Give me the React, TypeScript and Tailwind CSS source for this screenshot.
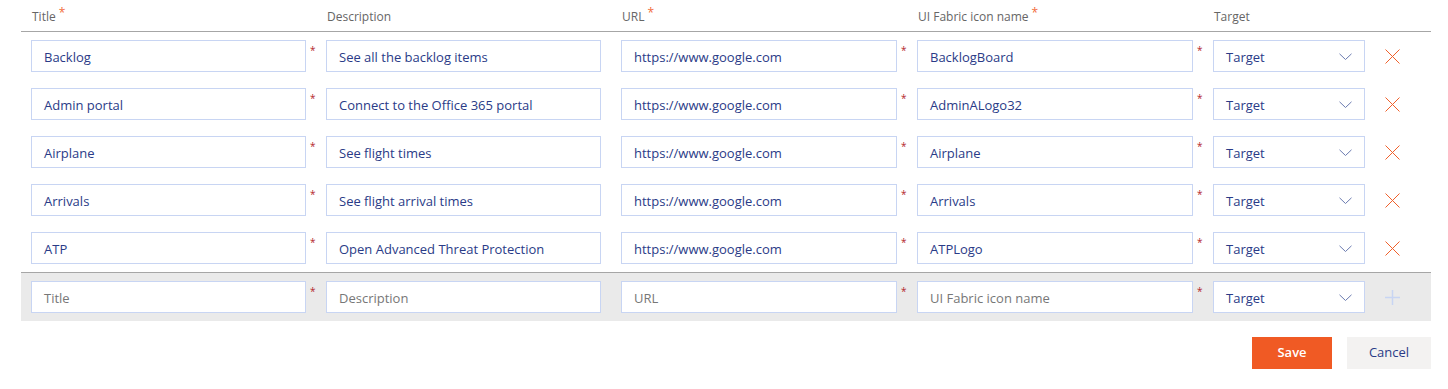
import React from 'react';

const rows = [
  { title: 'Backlog', description: 'See all the backlog items', url: 'https://www.google.com', icon: 'BacklogBoard' },
  { title: 'Admin portal', description: 'Connect to the Office 365 portal', url: 'https://www.google.com', icon: 'AdminALogo32' },
  { title: 'Airplane', description: 'See flight times', url: 'https://www.google.com', icon: 'Airplane' },
  { title: 'Arrivals', description: 'See flight arrival times', url: 'https://www.google.com', icon: 'Arrivals' },
  { title: 'ATP', description: 'Open Advanced Threat Protection', url: 'https://www.google.com', icon: 'ATPLogo' },
];

const grid = 'grid grid-cols-[275px_20px_275px_20px_276px_20px_276px_20px_152px_66px] items-start';

function Field({ value, placeholder }: { value?: string; placeholder?: string }) {
  return (
    <div className="h-8 border border-[#c8d5f3] bg-white pl-[12px] pt-[3px] flex items-center text-[13px] whitespace-nowrap overflow-hidden">
      {value ? <span className="text-[#2a3b87]">{value}</span> : <span className="text-[#777]">{placeholder}</span>}
    </div>
  );
}

function Req() {
  return <span className="block pl-[4px] pt-[5px] text-[10px] leading-none text-[#b3262c]">*</span>;
}

function TargetSelect() {
  return (
    <div className="h-8 border border-[#c8d5f3] bg-white pl-[12px] pr-[12px] flex items-center justify-between text-[13px]">
      <span className="text-[#2a3b87] pt-[3px]">Target</span>
      <svg width="13" height="8" viewBox="0 0 13 8" fill="none" className="mt-[2px]">
        <path d="M0.5 0.8 L6.5 6.5 L12.5 0.8" stroke="#6b7bb0" strokeWidth="1" />
      </svg>
    </div>
  );
}

function Row({ r, empty }: { r?: (typeof rows)[number]; empty?: boolean }) {
  return (
    <div className={`${grid} py-2 px-[10px]`}>
      <Field value={r?.title} placeholder="Title" />
      <Req />
      <Field value={r?.description} placeholder="Description" />
      <span />
      <Field value={r?.url} placeholder="URL" />
      <Req />
      <Field value={r?.icon} placeholder="UI Fabric icon name" />
      <Req />
      <TargetSelect />
      <div className="h-8 flex items-center pl-[20px]">
        {empty ? (
          <svg width="15" height="15" viewBox="0 0 15 15">
            <path d="M7.5 0 V15 M0 7.5 H15" stroke="#c8d5f3" strokeWidth="1.5" />
          </svg>
        ) : (
          <svg width="15" height="15" viewBox="0 0 15 15">
            <path d="M0.5 0.5 L14.5 14.5 M14.5 0.5 L0.5 14.5" stroke="#f0602a" strokeWidth="1" />
          </svg>
        )}
      </div>
    </div>
  );
}

function Label({ text, required }: { text: string; required?: boolean }) {
  return (
    <div className="text-[12px] text-[#666] pl-[1px] pt-[8px] whitespace-nowrap">
      {text}
      {required && <sup className="text-[#f26b3a] text-[12px] ml-[3px] top-[-4px]">*</sup>}
    </div>
  );
}

export default function App() {
  return (
    <div className="w-[1448px] h-[389px] bg-white pl-[21px]" style={{ fontFamily: '"Open Sans", "Noto Sans", sans-serif' }}>
      <div className="w-[1410px]">
        {/* header */}
        <div className={`${grid} h-[32px] px-[10px] border-b border-[#a6a6a6]`}>
          <Label text="Title" required />
          <span />
          <Label text="Description" />
          <span />
          <Label text="URL" required />
          <span />
          <Label text="UI Fabric icon name" required />
          <span />
          <Label text="Target" />
          <span />
        </div>

        {rows.map((r) => (
          <Row key={r.title} r={r} />
        ))}

        {/* new item row */}
        <div className="bg-[#eaeaea] border-t border-[#a6a6a6]">
          <Row empty />
        </div>

        <div className="flex justify-end gap-[15px] mt-4">
          <button className="w-20 h-8 bg-[#f05a24] text-white text-[13px] font-semibold">Save</button>
          <button className="w-[84px] h-8 bg-[#f3f2f1] text-[#2a3b87] text-[13px]">Cancel</button>
        </div>
      </div>
    </div>
  );
}
